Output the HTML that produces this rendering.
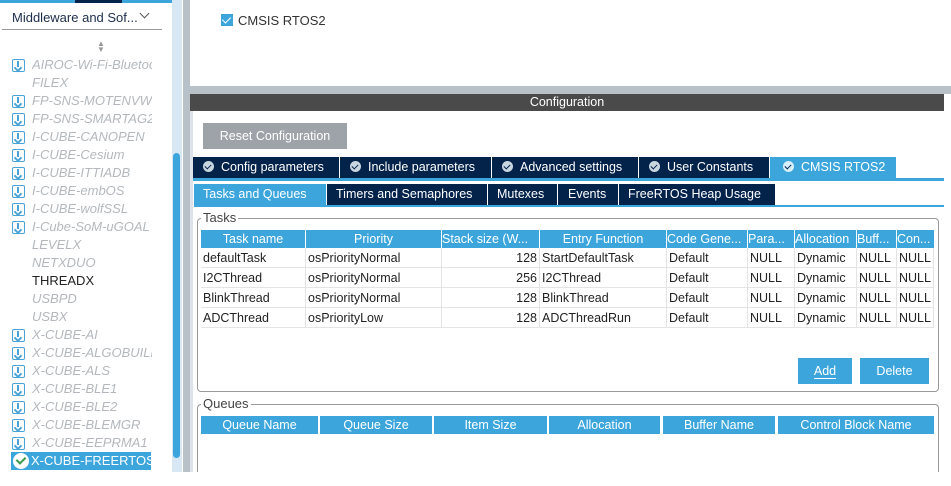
<!DOCTYPE html>
<html><head><meta charset="utf-8"><style>
*{margin:0;padding:0;box-sizing:border-box}
html,body{width:951px;height:486px;overflow:hidden}
body{background:#fff;font-family:"Liberation Sans",Arial,sans-serif;position:relative;color:#222}
.a{position:absolute}
.it{position:absolute;left:32px;font-size:13px;font-style:italic;color:#b4b8bc;white-space:nowrap;width:120px;overflow:hidden;height:18px;line-height:18px}
.ic{position:absolute;left:12px;width:13px;height:13px;border:1.5px solid #4aa3d6;border-radius:2px}
.ic:after{content:"";position:absolute;left:4px;top:1px;width:2px;height:6px;background:#4aa3d6}
.ic:before{content:"";position:absolute;left:2px;top:5px;width:4px;height:4px;border-right:2px solid #4aa3d6;border-bottom:2px solid #4aa3d6;transform:rotate(45deg)}
.tab{position:absolute;height:21px;line-height:21px;color:#fff;font-size:12.5px;background:#03234b;white-space:nowrap}
.tab i{display:inline-block;width:11px;height:11px;border-radius:50%;background:#c8d6e0;margin:0 7px 0 10px;vertical-align:-1px;position:relative}
.tab i:after{content:"";position:absolute;left:3px;top:2px;width:3px;height:5px;border-right:1.5px solid #03234b;border-bottom:1.5px solid #03234b;transform:rotate(45deg)}
.hd{position:absolute;height:18px;line-height:18px;background:#3ca6dc;color:#fff;font-size:12.5px;text-align:center;white-space:nowrap;overflow:hidden}
.c{position:absolute;height:20px;line-height:20px;font-size:12.5px;padding-left:2px;border-right:1px solid #e4e4e4;border-bottom:1px solid #e4e4e4;white-space:nowrap}
</style></head><body>
<div class="a" style="left:0;top:0;width:172px;height:3px;background:#3ca6dc"></div>
<div class="a" style="left:75px;top:0;width:47px;height:3px;background:#03234b"></div>
<div class="a" style="left:12px;top:10px;font-size:13px;color:#1c2d4a">Middleware and Sof...</div>
<div class="a" style="left:141px;top:10px;width:7px;height:7px;border-right:1px solid #555;border-bottom:1px solid #555;transform:rotate(45deg)"></div>
<div class="a" style="left:2px;top:29px;width:160px;height:1px;background:#999"></div>
<div class="a" style="left:97px;top:41px;font-size:8px;color:#999;line-height:6px">&#9650;<br>&#9660;</div>
<div class="a" style="left:172px;top:0;width:10px;height:472px;background:#d7e7f3"></div>
<div class="a" style="left:173px;top:153px;width:7px;height:305px;background:#3ca6dc;border-radius:4px"></div>
<div class="a" style="left:183px;top:0;width:7px;height:472px;background:#b8c1c8"></div>

<div class="ic" style="top:59px"></div><div class="it" style="top:56px">AIROC-Wi-Fi-Bluetooth</div>
<div class="it" style="top:74px">FILEX</div>
<div class="ic" style="top:95px"></div><div class="it" style="top:92px">FP-SNS-MOTENVWB1</div>
<div class="ic" style="top:113px"></div><div class="it" style="top:110px">FP-SNS-SMARTAG2</div>
<div class="ic" style="top:131px"></div><div class="it" style="top:128px">I-CUBE-CANOPEN</div>
<div class="ic" style="top:149px"></div><div class="it" style="top:146px">I-CUBE-Cesium</div>
<div class="ic" style="top:167px"></div><div class="it" style="top:164px">I-CUBE-ITTIADB</div>
<div class="ic" style="top:185px"></div><div class="it" style="top:182px">I-CUBE-embOS</div>
<div class="ic" style="top:203px"></div><div class="it" style="top:200px">I-CUBE-wolfSSL</div>
<div class="ic" style="top:221px"></div><div class="it" style="top:218px">I-Cube-SoM-uGOAL</div>
<div class="it" style="top:236px">LEVELX</div>
<div class="it" style="top:254px">NETXDUO</div>
<div class="it" style="top:272px;font-style:normal;color:#222">THREADX</div>
<div class="it" style="top:290px">USBPD</div>
<div class="it" style="top:308px">USBX</div>
<div class="ic" style="top:329px"></div><div class="it" style="top:326px">X-CUBE-AI</div>
<div class="ic" style="top:347px"></div><div class="it" style="top:344px">X-CUBE-ALGOBUILD</div>
<div class="ic" style="top:365px"></div><div class="it" style="top:362px">X-CUBE-ALS</div>
<div class="ic" style="top:383px"></div><div class="it" style="top:380px">X-CUBE-BLE1</div>
<div class="ic" style="top:401px"></div><div class="it" style="top:398px">X-CUBE-BLE2</div>
<div class="ic" style="top:419px"></div><div class="it" style="top:416px">X-CUBE-BLEMGR</div>
<div class="ic" style="top:437px"></div><div class="it" style="top:434px">X-CUBE-EEPRMA1</div>
<div class="a" style="left:11px;top:452px;width:140px;height:18px;background:#3ca6dc"></div>
<div class="a" style="left:13px;top:453px;width:16px;height:16px;border-radius:50%;background:#fff"></div>
<div class="a" style="left:18px;top:455px;width:6px;height:9px;border-right:2.5px solid #3a9a4a;border-bottom:2.5px solid #3a9a4a;transform:rotate(45deg)"></div>
<div class="it" style="top:452px;left:31px;font-style:normal;color:#fff;width:120px">X-CUBE-FREERTOS</div>

<div class="a" style="left:221px;top:14px;width:12px;height:12px;background:#3ca6dc"></div>
<div class="a" style="left:224px;top:15px;width:5px;height:8px;border-right:1.5px solid #fff;border-bottom:1.5px solid #fff;transform:rotate(45deg)"></div>
<div class="a" style="left:238px;top:13px;font-size:13px;color:#333">CMSIS RTOS2</div>
<div class="a" style="left:190px;top:86px;width:761px;height:8px;background:#b8c1c8"></div>
<div class="a" style="left:190px;top:94px;width:754px;height:17px;background:#4a4a4a;color:#fff;font-size:12.5px;text-align:center;line-height:17px">Configuration</div>
<div class="a" style="left:190px;top:111px;width:3px;height:361px;background:#dde3e8"></div>
<div class="a" style="left:203px;top:123px;width:144px;height:26px;background:#9da3a8;color:#fff;font-size:12.5px;text-align:center;line-height:26px">Reset Configuration</div>

<div class="tab" style="left:193px;top:157px;width:146px"><i></i>Config parameters</div>
<div class="tab" style="left:340px;top:157px;width:151px"><i></i>Include parameters</div>
<div class="tab" style="left:492px;top:157px;width:146px"><i></i>Advanced settings</div>
<div class="tab" style="left:639px;top:157px;width:130px"><i></i>User Constants</div>
<div class="tab" style="left:770px;top:157px;width:126px;background:#3ca6dc;padding-left:3px"><i style="background:#d8eef9"></i>CMSIS RTOS2</div>
<div class="a" style="left:193px;top:178px;width:751px;height:3px;background:#3ca6dc"></div>

<div class="tab" style="left:194px;top:184px;width:132px;background:#3ca6dc;padding-left:9px">Tasks and Queues</div>
<div class="tab" style="left:327px;top:184px;width:160px;padding-left:9px">Timers and Semaphores</div>
<div class="tab" style="left:488px;top:184px;width:69px;padding-left:9px">Mutexes</div>
<div class="tab" style="left:558px;top:184px;width:60px;padding-left:10px">Events</div>
<div class="tab" style="left:619px;top:184px;width:156px;padding-left:9px">FreeRTOS Heap Usage</div>
<div class="a" style="left:194px;top:205px;width:750px;height:2px;background:#3ca6dc"></div>

<div class="a" style="left:197px;top:218px;width:742px;height:174px;border:1px solid #999;border-radius:4px"></div>
<div class="a" style="left:201px;top:210px;background:#fff;font-size:13px;color:#444;padding:0 2px">Tasks</div>
<div class="hd" style="left:201px;top:230px;width:104px">Task name</div>
<div class="hd" style="left:306px;top:230px;width:135px">Priority</div>
<div class="hd" style="left:442px;top:230px;width:97px;text-align:left">Stack size (W...</div>
<div class="hd" style="left:540px;top:230px;width:126px">Entry Function</div>
<div class="hd" style="left:667px;top:230px;width:80px;text-align:left">Code Gene...</div>
<div class="hd" style="left:748px;top:230px;width:46px;text-align:left">Para...</div>
<div class="hd" style="left:795px;top:230px;width:61px;text-align:left">Allocation</div>
<div class="hd" style="left:857px;top:230px;width:39px;text-align:left">Buff...</div>
<div class="hd" style="left:897px;top:230px;width:37px;text-align:left">Con...</div>

<div class="a" style="left:798px;top:358px;width:54px;height:26px;background:#3ca6dc;color:#fff;font-size:12.5px;text-align:center;line-height:26px"><span style="border-bottom:1px solid #fff;line-height:14px;display:inline-block">Add</span></div>
<div class="a" style="left:860px;top:358px;width:69px;height:26px;background:#3ca6dc;color:#fff;font-size:12.5px;text-align:center;line-height:26px">Delete</div>

<div class="a" style="left:197px;top:404px;width:742px;height:68px;border:1px solid #999;border-bottom:none;border-radius:4px 4px 0 0"></div>
<div class="a" style="left:201px;top:396px;background:#fff;font-size:13px;color:#444;padding:0 2px">Queues</div>
<div class="hd" style="left:201px;top:416px;width:117px">Queue Name</div>
<div class="hd" style="left:320px;top:416px;width:112px">Queue Size</div>
<div class="hd" style="left:434px;top:416px;width:113px">Item Size</div>
<div class="hd" style="left:549px;top:416px;width:111px">Allocation</div>
<div class="hd" style="left:663px;top:416px;width:112px">Buffer Name</div>
<div class="hd" style="left:778px;top:416px;width:156px">Control Block Name</div>

<div class="c" style="left:201px;top:248px;width:105px">defaultTask</div><div class="c" style="left:306px;top:248px;width:136px">osPriorityNormal</div><div class="c" style="left:442px;top:248px;width:98px;text-align:right;padding-right:2px">128</div><div class="c" style="left:540px;top:248px;width:127px">StartDefaultTask</div><div class="c" style="left:667px;top:248px;width:81px">Default</div><div class="c" style="left:748px;top:248px;width:47px">NULL</div><div class="c" style="left:795px;top:248px;width:62px">Dynamic</div><div class="c" style="left:857px;top:248px;width:40px">NULL</div><div class="c" style="left:897px;top:248px;width:37px">NULL</div>
<div class="c" style="left:201px;top:268px;width:105px">I2CThread</div><div class="c" style="left:306px;top:268px;width:136px">osPriorityNormal</div><div class="c" style="left:442px;top:268px;width:98px;text-align:right;padding-right:2px">256</div><div class="c" style="left:540px;top:268px;width:127px">I2CThread</div><div class="c" style="left:667px;top:268px;width:81px">Default</div><div class="c" style="left:748px;top:268px;width:47px">NULL</div><div class="c" style="left:795px;top:268px;width:62px">Dynamic</div><div class="c" style="left:857px;top:268px;width:40px">NULL</div><div class="c" style="left:897px;top:268px;width:37px">NULL</div>
<div class="c" style="left:201px;top:288px;width:105px">BlinkThread</div><div class="c" style="left:306px;top:288px;width:136px">osPriorityNormal</div><div class="c" style="left:442px;top:288px;width:98px;text-align:right;padding-right:2px">128</div><div class="c" style="left:540px;top:288px;width:127px">BlinkThread</div><div class="c" style="left:667px;top:288px;width:81px">Default</div><div class="c" style="left:748px;top:288px;width:47px">NULL</div><div class="c" style="left:795px;top:288px;width:62px">Dynamic</div><div class="c" style="left:857px;top:288px;width:40px">NULL</div><div class="c" style="left:897px;top:288px;width:37px">NULL</div>
<div class="c" style="left:201px;top:308px;width:105px">ADCThread</div><div class="c" style="left:306px;top:308px;width:136px">osPriorityLow</div><div class="c" style="left:442px;top:308px;width:98px;text-align:right;padding-right:2px">128</div><div class="c" style="left:540px;top:308px;width:127px">ADCThreadRun</div><div class="c" style="left:667px;top:308px;width:81px">Default</div><div class="c" style="left:748px;top:308px;width:47px">NULL</div><div class="c" style="left:795px;top:308px;width:62px">Dynamic</div><div class="c" style="left:857px;top:308px;width:40px">NULL</div><div class="c" style="left:897px;top:308px;width:37px">NULL</div>
</body></html>
